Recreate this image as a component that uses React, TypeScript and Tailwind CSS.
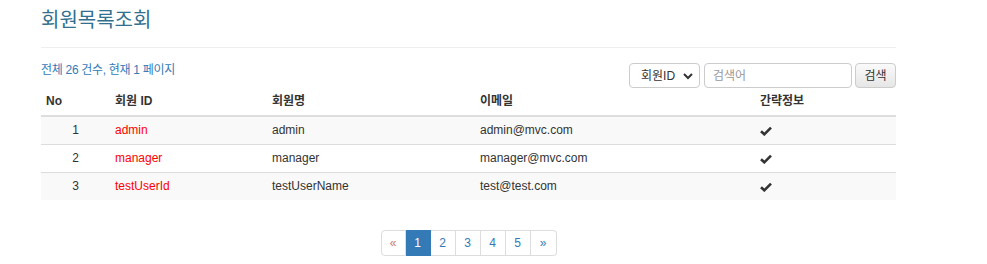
import React from "react";

const rows = [
  { no: 1, id: "admin", name: "admin", email: "admin@mvc.com" },
  { no: 2, id: "manager", name: "manager", email: "manager@mvc.com" },
  { no: 3, id: "testUserId", name: "testUserName", email: "test@test.com" },
];

function Check() {
  return (
    <svg width="12" height="10" viewBox="0 0 12 10" className="block">
      <path d="M1 5.2 L4.3 8.3 L11 1.6" fill="none" stroke="#333" strokeWidth="2.6" />
    </svg>
  );
}

export default function App() {
  const font = { fontFamily: '"Liberation Sans", Arial, "Noto Sans CJK KR", sans-serif' };
  return (
    <div className="w-[987px] h-[264px] bg-white text-[#333]" style={font}>
      <div className="ml-[41px] w-[855px]">
        <div className="pt-[7px] h-[33px] text-[20px] leading-[26px] text-[#31708f]">회원목록조회</div>
        <div className="mt-[14px] h-px bg-[#eee]" />
        <div className="mt-[14px] flex justify-between h-[26px]">
          <div className="text-[12px] leading-[17px] tracking-[-0.3px] text-[#337ab7]">전체 26 건수, 현재 1 페이지</div>
          <div className="mt-[1px] flex gap-[4px] h-[25px]">
            <div className="w-[71px] h-[25px] border border-[#ccc] rounded-[4px] flex items-center justify-between pl-[11px] pr-[6px] text-[12px]">
              <span>회원ID</span>
              <svg width="10" height="8" viewBox="0 0 10 8" className="block">
                <path d="M1 2 L5 6 L9 2" fill="none" stroke="#333" strokeWidth="2" />
              </svg>
            </div>
            <div className="w-[148px] h-[25px] border border-[#ccc] rounded-[4px] flex items-center pl-[8px] text-[12px] text-[#999]">검색어</div>
            <div className="w-[41px] ml-[-1px] h-[25px] border border-[#ccc] rounded-[4px] flex items-center justify-center text-[12px] bg-gradient-to-b from-[#fafafa] to-[#e6e6e6]">검색</div>
          </div>
        </div>
        <div className="text-[12px] leading-[17px]">
          <div className="grid grid-cols-[69px_157px_208px_280px_141px] h-[29px] border-b-2 border-[#ddd] font-bold">
            <div className="px-[5px] pt-[5px]">No</div>
            <div className="px-[5px] pt-[5px]">회원 ID</div>
            <div className="px-[5px] pt-[5px]">회원명</div>
            <div className="px-[5px] pt-[5px]">이메일</div>
            <div className="px-[5px] pt-[5px]">간략정보</div>
          </div>
          {rows.map((r, i) => (
            <div
              key={r.no}
              className={
                "grid grid-cols-[69px_157px_208px_280px_141px] " +
                (i === 0 ? "h-[27px] " : "h-[28px] border-t border-[#ddd] ") +
                (i % 2 === 0 ? "bg-[#f9f9f9]" : "bg-white")
              }
            >
              <div className="px-[5px] pt-[5px] text-center">{r.no}</div>
              <div className="px-[5px] pt-[5px] text-[#ff0000]">{r.id}</div>
              <div className="px-[5px] pt-[5px]">{r.name}</div>
              <div className="px-[5px] pt-[5px]">{r.email}</div>
              <div className="px-[5px] pt-[9px]">
                <Check />
              </div>
            </div>
          ))}
        </div>
        <div className="mt-[30px] flex justify-center">
          <div className="flex h-[26px] text-[12px]">
            {["«", "1", "2", "3", "4", "5", "»"].map((p, i) => (
              <div
                key={i}
                className={
                  "w-[25px] h-[26px] flex items-center justify-center border-y border-r " +
                  (i === 0 ? "border-l rounded-l-[4px] " : "") +
                  (i === 6 ? "rounded-r-[4px] w-[26px] " : "") +
                  (p === "1"
                    ? "bg-[#337ab7] border-[#337ab7] text-white"
                    : i === 0
                    ? "border-[#ddd] text-[#c9787a]"
                    : "border-[#ddd] text-[#337ab7]")
                }
              >
                {p}
              </div>
            ))}
          </div>
        </div>
      </div>
    </div>
  );
}
